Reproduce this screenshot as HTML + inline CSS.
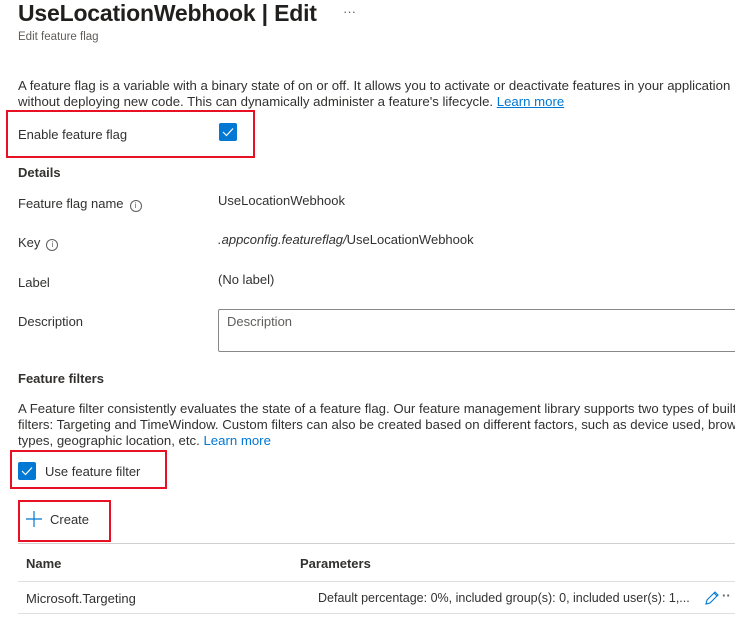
<!DOCTYPE html>
<html><head><meta charset="utf-8"><style>
body{margin:0;width:735px;height:629px;overflow:hidden;background:#fff;font-family:"Liberation Sans",sans-serif;color:#323130;position:relative}
.a{position:absolute;white-space:nowrap;font-size:13px}
.red{position:absolute;border:2px solid #e81123;box-sizing:border-box}
.cb{position:absolute;width:18px;height:18px;background:#0078d4;border-radius:2px}
.cb svg{position:absolute;left:3px;top:4px}
a{color:#0078d4;text-decoration:underline}
.hl{position:absolute;height:1px;background:#e1dfdd}
.i{display:inline-block;width:10px;height:10px;border:1px solid #605e5c;border-radius:50%;font-size:8px;line-height:10px;text-align:center;margin-left:6px;vertical-align:0px;color:#605e5c}
</style></head><body>
<div class="a" style="left:18px;top:0px;font-size:23px;font-weight:600;color:#201f1e;letter-spacing:-0.2px">UseLocationWebhook | Edit</div>
<div class="a" style="left:343px;top:4px;font-size:13px;color:#605e5c">···</div>
<div class="a" style="left:18px;top:31px;font-size:11.5px;color:#605e5c">Edit feature flag</div>
<div class="a" style="left:18px;top:78px;line-height:16px;font-size:13.2px">A feature flag is a variable with a binary state of on or off. It allows you to activate or deactivate features in your application<br>without deploying new code. This can dynamically administer a feature's lifecycle. <a>Learn more</a></div>
<div class="red" style="left:6px;top:110px;width:249px;height:48px"></div>
<div class="a" style="left:18px;top:127px">Enable feature flag</div>
<div class="cb" style="left:219px;top:123px"><svg width="12" height="10" viewBox="0 0 12 10"><path d="M1 5l3.5 3.5L11 1.5" stroke="#fff" stroke-width="1.2" fill="none"/></svg></div>
<div class="a" style="left:18px;top:165px;font-weight:bold;font-size:13px">Details</div>
<div class="a" style="left:18px;top:196px">Feature flag name<span class="i">i</span></div>
<div class="a" style="left:218px;top:193px">UseLocationWebhook</div>
<div class="a" style="left:18px;top:235px">Key<span class="i">i</span></div>
<div class="a" style="left:218px;top:232px"><i>.appconfig.featureflag/</i>UseLocationWebhook</div>
<div class="a" style="left:18px;top:275px">Label</div>
<div class="a" style="left:218px;top:272px">(No label)</div>
<div class="a" style="left:18px;top:314px">Description</div>
<div style="position:absolute;left:218px;top:309px;width:530px;height:43px;border:1px solid #8a8886;box-sizing:border-box;border-radius:2px"></div>
<div class="a" style="left:227px;top:314px;color:#605e5c">Description</div>
<div class="a" style="left:18px;top:371px;font-weight:bold;font-size:13px">Feature filters</div>
<div class="a" style="left:18px;top:401px;line-height:16px;font-size:13.2px">A Feature filter consistently evaluates the state of a feature flag. Our feature management library supports two types of built-in<br>filters: Targeting and TimeWindow. Custom filters can also be created based on different factors, such as device used, browser<br>types, geographic location, etc. <a style="text-decoration:none">Learn more</a></div>
<div class="red" style="left:10px;top:450px;width:157px;height:39px"></div>
<div class="cb" style="left:18px;top:462px"><svg width="12" height="10" viewBox="0 0 12 10"><path d="M1 5l3.5 3.5L11 1.5" stroke="#fff" stroke-width="1.2" fill="none"/></svg></div>
<div class="a" style="left:45px;top:464px">Use feature filter</div>
<div class="red" style="left:18px;top:500px;width:93px;height:42px"></div>
<svg style="position:absolute;left:26px;top:511px" width="16" height="16"><path d="M8 0v16M0 8h16" stroke="#0078d4" stroke-width="1.2"/></svg>
<div class="a" style="left:50px;top:512px">Create</div>
<div class="hl" style="left:18px;top:543px;width:717px;background:#d2d0ce"></div>
<div class="a" style="left:26px;top:556px;font-weight:bold;color:#323130">Name</div>
<div class="a" style="left:300px;top:556px;font-weight:bold;color:#323130">Parameters</div>
<div class="hl" style="left:18px;top:581px;width:717px"></div>
<div class="a" style="left:26px;top:591px">Microsoft.Targeting</div>
<div class="a" style="left:318px;top:591px;font-size:12.5px">Default percentage: 0%, included group(s): 0, included user(s): 1,...</div>
<svg style="position:absolute;left:704px;top:590px" width="16" height="16" viewBox="0 0 16 16"><path d="M2 14l1-4 8-8 3 3-8 8zM10 3l3 3" stroke="#0078d4" stroke-width="1.1" fill="none"/></svg>
<div class="a" style="left:722px;top:588px;font-weight:bold;color:#605e5c">··</div>
<div class="hl" style="left:18px;top:613px;width:717px"></div>
</body></html>
